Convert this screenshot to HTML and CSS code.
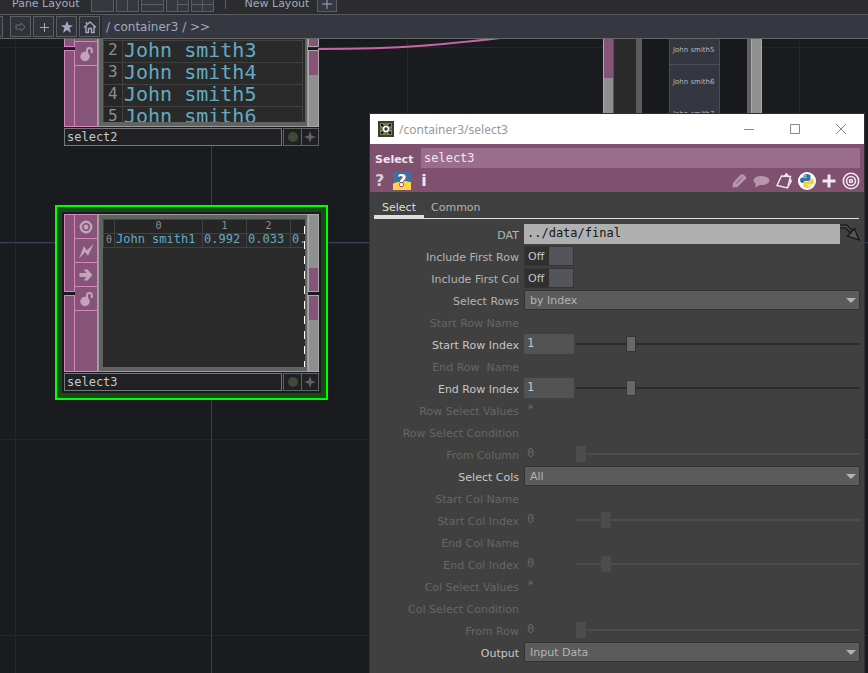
FILE: index.html
```
<!DOCTYPE html>
<html lang="en">
<head>
  <meta charset="UTF-8" />
  <meta name="viewport" content="width=device-width, initial-scale=1.0" />
  <title>/container3/select3</title>
  <link rel="stylesheet" href="styles.css">
</head>
<body>
  <svg class="defs" width="0" height="0">
    <symbol id="target" viewBox="0 0 18 18">
      <circle cx="9" cy="9" r="5.2" fill="none" stroke="currentColor" stroke-width="2.4"/>
      <circle cx="9" cy="9" r="2.4" fill="currentColor"/>
    </symbol>
    <symbol id="bolt" viewBox="0 0 18 18">
      <path d="M2 16.500 7 4l2.800 4.500L16.500 2 11 14 8.200 10z" fill="currentColor"/>
    </symbol>
    <symbol id="arrow" viewBox="0 0 18 18">
      <path d="M2.500 7h7L6.500 3.500h4L15.500 9l-5 5.500h-4l3-3.500h-7z" fill="currentColor"/>
    </symbol>
    <symbol id="lock" viewBox="0 0 18 18">
      <circle cx="8" cy="11.500" r="4.700" fill="currentColor"/>
      <path d="M10 8V5.500a2.400 2.400 0 0 1 4.800 0V8" fill="none" stroke="currentColor" stroke-width="2"/>
    </symbol>
    <symbol id="spark" viewBox="0 0 12 12">
      <path d="M6 0 7.500 4.500 12 6 7.500 7.500 6 12 4.500 7.500 0 6 4.500 4.500z" fill="currentColor"/>
    </symbol>
  </svg>

  <div class="app">
    <header class="layout-bar">
      <span>Pane Layout</span>
      <div class="layouts">
        <button class="layout" aria-label="Single pane"></button>
        <button class="layout split-v" aria-label="Split left and right"></button>
        <button class="layout split-h" aria-label="Split top and bottom"></button>
        <button class="layout split-v split-right" aria-label="Split right side"></button>
        <button class="layout split-v split-h" aria-label="Four panes"></button>
      </div>
      <i class="divider"></i>
      <span>New Layout</span>
      <button class="add-layout" aria-label="Add layout">
        <svg width="12" height="12" viewBox="0 0 12 12"><path d="M6 1v10M1 6h10" stroke="currentColor"/></svg>
      </button>
    </header>

    <nav class="path-bar">
      <button class="nav-btn back" aria-label="Back">
        <svg width="14" height="14" viewBox="0 0 14 14"><path d="M13 5H7V2L2 7l5 5V9h6z" fill="none" stroke="currentColor"/></svg>
      </button>
      <button class="nav-btn dim" aria-label="Forward">
        <svg width="14" height="14" viewBox="0 0 14 14"><path d="M2 5h5V3l4 4-4 4V9H2z" fill="none" stroke="currentColor"/></svg>
      </button>
      <button class="nav-btn" aria-label="Add bookmark">
        <svg width="14" height="14" viewBox="0 0 14 14"><path d="M7.500 3v9M3 7.500h9" stroke="currentColor"/></svg>
      </button>
      <button class="nav-btn" aria-label="Bookmarks">
        <svg width="14" height="14" viewBox="0 0 14 14"><path d="M7 1l1.700 4.300H13L9.600 8l1.400 5-4-3-4 3 1.400-5L1 5.300h4.300z" fill="currentColor"/></svg>
      </button>
      <button class="nav-btn" aria-label="Home">
        <svg width="14" height="14" viewBox="0 0 14 14"><path d="M1 7.500 7 2l6 5.500M3 6v6.500h2.500v-4h3v4H11V6M3.500 4V2" fill="none" stroke="currentColor" stroke-width="1.400"/></svg>
      </button>
      <div class="path">/ container3 / &gt;&gt;</div>
    </nav>

    <main class="network">
      <svg class="wire" width="290" height="20" viewBox="0 0 290 20">
        <path d="M0 10C90 10 130 5 200-3" fill="none" stroke="#c865a6" stroke-width="2"/>
      </svg>

      <section class="node select2">
        <div class="node-body">
          <div class="inputs"><i></i><i></i></div>
          <div class="flags">
            <button aria-label="Display"></button>
            <button aria-label="Bypass"></button>
            <button aria-label="Export"></button>
            <button aria-label="Lock"><svg width="18" height="18"><use href="#lock"/></svg></button>
          </div>
          <div class="viewer">
            <table class="large">
              <tr><th>2</th><td>John smith3</td></tr>
              <tr><th>3</th><td>John smith4</td></tr>
              <tr><th>4</th><td>John smith5</td></tr>
              <tr><th>5</th><td>John smith6</td></tr>
            </table>
          </div>
          <div class="outputs"><i></i><i></i></div>
        </div>
        <div class="node-foot">
          <span class="node-name">select2</span>
          <button class="dot" aria-label="Viewer"></button><button aria-label="Activate"><svg width="12" height="12"><use href="#spark"/></svg></button>
        </div>
      </section>

      <section class="node select3">
        <div class="node-body">
          <div class="inputs"><i></i><i></i></div>
          <div class="flags">
            <button aria-label="Display"><svg width="18" height="18"><use href="#target"/></svg></button>
            <button aria-label="Bypass"><svg width="18" height="18"><use href="#bolt"/></svg></button>
            <button aria-label="Export"><svg width="18" height="18"><use href="#arrow"/></svg></button>
            <button aria-label="Lock"><svg width="18" height="18"><use href="#lock"/></svg></button>
          </div>
          <div class="viewer active">
            <table class="small">
              <tr><th class="index"></th><th class="wide">0</th><th>1</th><th>2</th><th></th></tr>
              <tr><th>0</th><td>John smith1</td><td>0.992</td><td>0.033</td><td>0.</td></tr>
            </table>
          </div>
          <div class="outputs"><i></i><i></i></div>
        </div>
        <div class="node-foot">
          <span class="node-name">select3</span>
          <button class="dot" aria-label="Viewer"></button><button aria-label="Activate"><svg width="12" height="12"><use href="#spark"/></svg></button>
        </div>
      </section>

      <section class="node list-node">
        <div class="list-input"></div>
        <div class="list-flags"></div>
        <div class="list-viewer">
          <ul>
            <li>John smith5</li>
            <li>John smith6</li>
            <li>John smith7</li>
          </ul>
        </div>
        <div class="list-output"></div>
      </section>
    </main>
  </div>

  <div class="window">
    <div class="title-bar">
      <svg width="16" height="16" viewBox="0 0 16 16">
        <path fill="#77855c" stroke="#3b3f33" stroke-width="2" d="M1 1h14v14H1z"/>
        <path d="M8 1v14M1 8h14" stroke="#4c553d"/>
        <path d="M4 4l8 8M12 4l-8 8" stroke="#20221c" stroke-width="1.500"/>
        <path d="M3 3h2v2H3zM11 3h2v2h-2zM3 11h2v2H3zM11 11h2v2h-2z" fill="#111"/>
        <circle cx="8" cy="8" r="2.500" fill="#333" stroke="#fff" stroke-width="1.600"/>
      </svg>
      <span class="title">/container3/select3</span>
      <button aria-label="Minimize"><svg width="12" height="12"><path d="M1 6.500h10" stroke="#888"/></svg></button>
      <button aria-label="Maximize"><svg width="12" height="12"><path d="M1.500 1.500h9v9h-9z" fill="none" stroke="#888"/></svg></button>
      <button aria-label="Close"><svg width="12" height="12"><path d="M1 1l10 10M11 1 1 11" stroke="#888"/></svg></button>
    </div>

    <div class="op-head">
      <div class="op-name">
        <label for="op_name">Select</label>
        <input type="text" id="op_name" value="select3">
      </div>
      <div class="op-tools">
        <button class="help">?</button>
        <button class="python-help">?</button>
        <button class="info">i</button>
        <span class="spacer"></span>
        <button class="faded" aria-label="Edit">
          <svg width="16" height="16" viewBox="0 0 16 16"><path d="M1.500 14.500 2 10 9.500 1.500h3L15 4v1.500L6.500 14z" fill="currentColor"/><path d="M5.500 10.500 11 4.500" stroke="#80506f"/></svg>
        </button>
        <button class="faded" aria-label="Comment">
          <svg width="18" height="16" viewBox="0 0 18 16"><ellipse cx="9.500" cy="7.500" rx="8" ry="4.500" fill="currentColor"/><path d="M4 9.500 3 14.500l6-3z" fill="currentColor"/></svg>
        </button>
        <button aria-label="Copy parameters">
          <svg width="18" height="18" viewBox="0 0 18 18"><path d="M6.500 4 15.500 4.500 12.500 16 2 13.500z" fill="none" stroke="currentColor" stroke-width="1.400"/><path d="M9 4.500 11.500 1l2 3.500z" fill="currentColor" stroke="currentColor"/><path d="M15.500 6 17 9l-4 7.500z" fill="currentColor"/></svg>
        </button>
        <button aria-label="Python">
          <svg width="18" height="18" viewBox="0 0 18 18"><circle cx="9" cy="9" r="9" fill="#fff"/><path d="M5.500 5V3.500Q5.500 2 9 2t3.500 1.700V7Q12.500 9 10.500 9h-3Q5.500 9 5.500 11H4Q2 11 2 8.300T4 5.600h5V5z" fill="#3573a5"/><path d="M12.500 13v1.500Q12.500 16 9 16t-3.500-1.700V11Q5.500 9.500 7.500 9.500h3Q13 9.500 13 6.500h1.500Q16 7 16 9.700t-2 2.700H9v.6z" fill="#fc3"/><circle cx="7.200" cy="3.700" r=".7" fill="#fff"/><circle cx="10.800" cy="14.300" r=".7" fill="#fff"/></svg>
        </button>
        <button aria-label="Expand">
          <svg width="16" height="18" viewBox="0 0 16 18"><path d="M8 2.500v13M1.500 9h13" stroke="currentColor" stroke-width="3"/></svg>
        </button>
        <button aria-label="Target">
          <svg width="18" height="18" viewBox="0 0 18 18" fill="none" stroke="currentColor" stroke-width="1.600"><circle cx="9" cy="9" r="7.700"/><circle cx="9" cy="9" r="4.500"/><circle cx="9" cy="9" r="1.500"/></svg>
        </button>
      </div>
    </div>

    <div class="tabs">
      <button class="tab selected">Select</button>
      <button class="tab">Common</button>
    </div>

    <form class="params">
      <div class="row">
        <label for="dat">DAT</label>
        <div class="field">
          <input type="text" class="dat" id="dat" value="../data/final">
          <svg width="20" height="20" viewBox="0 0 20 20"><path d="M0 2.500h6L13 9" fill="none" stroke="#151515" stroke-width="4"/><path d="M0 2.500h6L12 8" fill="none" stroke="#555" stroke-width="1.500"/><path d="M14.500 4.500 19 16 7.500 12z" fill="#555" stroke="#151515" stroke-width="1.300"/></svg>
        </div>
      </div>
      <div class="row">
        <label for="first_row">Include First Row</label>
        <div class="field"><div class="toggle"><span>Off</span><input type="checkbox" id="first_row"></div></div>
      </div>
      <div class="row">
        <label for="first_col">Include First Col</label>
        <div class="field"><div class="toggle"><span>Off</span><input type="checkbox" id="first_col"></div></div>
      </div>
      <div class="row">
        <label for="select_rows">Select Rows</label>
        <div class="field menu"><select id="select_rows"><option>by Index</option></select></div>
      </div>
      <div class="row off">
        <label for="start_row_name">Start Row Name</label>
        <div class="field"><input type="text" id="start_row_name" disabled></div>
      </div>
      <div class="row on">
        <label for="start_row">Start Row Index</label>
        <div class="field"><input type="text" class="num" id="start_row" value="1"><input type="range" min="-1" max="10" value="1" aria-label="Start Row Index slider"></div>
      </div>
      <div class="row off">
        <label for="end_row_name">End Row&nbsp; Name</label>
        <div class="field"><input type="text" id="end_row_name" disabled></div>
      </div>
      <div class="row on">
        <label for="end_row">End Row Index</label>
        <div class="field"><input type="text" class="num" id="end_row" value="1"><input type="range" min="-1" max="10" value="1" aria-label="End Row Index slider"></div>
      </div>
      <div class="row off">
        <label for="row_values">Row Select Values</label>
        <div class="field"><input type="text" id="row_values" value="*" disabled></div>
      </div>
      <div class="row off">
        <label for="row_condition">Row Select Condition</label>
        <div class="field"><input type="text" id="row_condition" disabled></div>
      </div>
      <div class="row off">
        <label for="from_col">From Column</label>
        <div class="field"><input type="text" class="num" id="from_col" value="0" disabled><input type="range" min="0" max="10" value="0" aria-label="From Column slider" disabled></div>
      </div>
      <div class="row on">
        <label for="select_cols">Select Cols</label>
        <div class="field menu"><select id="select_cols"><option>All</option></select></div>
      </div>
      <div class="row off">
        <label for="start_col_name">Start Col Name</label>
        <div class="field"><input type="text" id="start_col_name" disabled></div>
      </div>
      <div class="row off">
        <label for="start_col">Start Col Index</label>
        <div class="field"><input type="text" class="num" id="start_col" value="0" disabled><input type="range" min="-1" max="10" value="0" aria-label="Start Col Index slider" disabled></div>
      </div>
      <div class="row off">
        <label for="end_col_name">End Col Name</label>
        <div class="field"><input type="text" id="end_col_name" disabled></div>
      </div>
      <div class="row off">
        <label for="end_col">End Col Index</label>
        <div class="field"><input type="text" class="num" id="end_col" value="0" disabled><input type="range" min="-1" max="10" value="0" aria-label="End Col Index slider" disabled></div>
      </div>
      <div class="row off">
        <label for="col_values">Col Select Values</label>
        <div class="field"><input type="text" id="col_values" value="*" disabled></div>
      </div>
      <div class="row off">
        <label for="col_condition">Col Select Condition</label>
        <div class="field"><input type="text" id="col_condition" disabled></div>
      </div>
      <div class="row off">
        <label for="from_row">From Row</label>
        <div class="field"><input type="text" class="num" id="from_row" value="0" disabled><input type="range" min="0" max="10" value="0" aria-label="From Row slider" disabled></div>
      </div>
      <div class="row on">
        <label for="output">Output</label>
        <div class="field menu"><select id="output"><option>Input Data</option></select></div>
      </div>
    </form>
  </div>
</body>
</html>
```

FILE: styles.css
```
* {
  box-sizing: border-box;
}
body {
  margin: 0;
  font-family: "DejaVu Sans", Verdana, sans-serif;
  font-size: 11px;
  color: #b4b4b4;
  background: #1a1b1f;
}
button, input, select {
  font: inherit;
  color: inherit;
  background: none;
  border: 0;
  border-radius: 0;
  padding: 0;
  margin: 0;
}
svg {
  display: block;
}
.defs {
  position: absolute;
}
.app {
  display: flex;
  flex-direction: column;
  height: 100vh;
  overflow: hidden;
}

/* top bars */
.layout-bar {
  display: flex;
  align-items: flex-end;
  height: 15px;
  padding: 0 12px 2px;
  background: #2b2c2f;
  border-bottom: 1px solid #5a5a5a;
  color: #a3a9bd;
  line-height: 16px;
}
.layouts {
  display: flex;
  gap: 2px;
  margin-left: 11px;
}
.layout {
  width: 23px;
  height: 16px;
  background-color: #353841;
  border: 1px solid #5c5e63;
}
.split-v {
  background-image: linear-gradient(#5c5e63, #5c5e63);
  background-size: 1px 100%;
  background-position: center;
  background-repeat: no-repeat;
}
.split-h {
  background-image: linear-gradient(#5c5e63, #5c5e63);
  background-size: 100% 1px;
  background-position: center;
  background-repeat: no-repeat;
}
.split-v.split-h {
  background-image: linear-gradient(#5c5e63, #5c5e63), linear-gradient(#5c5e63, #5c5e63);
  background-size: 1px 100%, 100% 1px;
}
.split-right {
  background-image: linear-gradient(#5c5e63, #5c5e63), linear-gradient(#5c5e63, #5c5e63);
  background-size: 1px 100%, 50% 1px;
  background-position: center, right center;
}
.divider {
  width: 1px;
  height: 14px;
  margin: 0 19px 3px 11px;
  background: #5c5e63;
}
.add-layout {
  display: flex;
  align-items: center;
  justify-content: center;
  width: 20px;
  height: 16px;
  margin-left: 8px;
  background: #353841;
  border: 1px solid #5c5e63;
}
.path-bar {
  display: flex;
  align-items: center;
  gap: 2px;
  height: 24px;
  background: #2b2c2f;
  border-bottom: 1px solid #666;
  color: #a3a9bd;
}
.nav-btn {
  display: flex;
  align-items: center;
  justify-content: center;
  width: 21px;
  height: 21px;
  background: #31333b;
  border: 1px solid #5c5e63;
}
.back {
  margin: 0 5px 0 -18px;
}
.dim {
  color: #666a75;
}
.path {
  flex: 1;
  align-self: stretch;
  padding-left: 4px;
  background: #353841;
  font-size: 12px;
  line-height: 24px;
}

/* network canvas */
.network {
  position: relative;
  flex: 1;
  overflow: hidden;
  background-color: #1a1b1f;
  background-image:
    linear-gradient(#3c3b5a, #3c3b5a),
    linear-gradient(#3c3b5a, #3c3b5a),
    linear-gradient(90deg, #25262b 1px, transparent 1px),
    linear-gradient(#25262b 1px, transparent 1px);
  background-size: 1px 100%, 100% 1px, 196px 196px, 196px 196px;
  background-position: 211px 0, 0 203px, 15px 0, 0 8px;
  background-repeat: no-repeat, no-repeat, repeat, repeat;
}
.wire {
  position: absolute;
  left: 318px;
  top: 0;
}
.node {
  position: absolute;
}
.select2 {
  left: 64px;
  top: -70px;
  width: 255px;
}
.select3 {
  left: 55px;
  top: 166px;
  width: 273px;
  padding: 7px;
  background: #1a1b1f;
  border: 2px solid #00ff00;
  box-shadow: inset 0 0 0 5px #164a1a;
}
.node-body {
  display: flex;
  height: 158px;
}
.inputs, .outputs {
  display: flex;
  flex-direction: column;
  gap: 3px;
  width: 11px;
}
.inputs i, .outputs i {
  flex: 1;
}
.inputs i {
  background: #855478;
  border: 1px solid #d884bf;
}
.outputs i {
  background: #8f8f8f;
  border: 1px solid #aaaaaa;
}
.outputs i:first-child {
  background: linear-gradient(to top, #855478 23px, #8f8f8f 23px);
}
.outputs i:last-child {
  background: linear-gradient(#855478 24px, #8f8f8f 24px);
}
.flags {
  width: 23px;
  background: #855478;
  border: 1px solid #d884bf;
  border-left: 0;
  color: #c5a3bc;
}
.flags button {
  display: flex;
  align-items: center;
  justify-content: center;
  width: 100%;
  height: 24px;
  border-bottom: 1px solid #d884bf;
}
.viewer {
  position: relative;
  flex: 1;
  overflow: hidden;
  background: #2a2a2a;
  border: 5px solid #626262;
  border-right-width: 3px;
  outline: 1px solid #999;
  outline-offset: -1px;
}
/* dashed edge of an active viewer */
.active::after {
  content: "";
  position: absolute;
  top: 7px;
  right: 0;
  bottom: 0;
  width: 1px;
  background: repeating-linear-gradient(#fff 0 8px, transparent 8px 15px);
}
table {
  border-collapse: collapse;
  table-layout: fixed;
  font-family: "DejaVu Sans Mono", monospace;
}
th, td {
  border: 1px solid #414141;
  padding: 0 1px;
  text-align: left;
  vertical-align: top;
  overflow: hidden;
  white-space: nowrap;
}
th {
  color: #8f8f8f;
  font-weight: normal;
  background: #262626;
}
td {
  color: #62aac4;
}
.small {
  width: 232px;
  font-size: 12px;
}
.small th, .small td {
  height: 14px;
  line-height: 11px;
}
.small th {
  font-size: 10px;
  line-height: 12px;
  text-align: center;
}
.small .index {
  width: 11px;
}
.small .wide {
  width: 88px;
}
.large {
  width: 200px;
  margin-top: 66px;
  font-size: 20px;
}
.large th, .large td {
  height: 22px;
  line-height: 18px;
}
.large th {
  width: 19px;
  padding-left: 4px;
  font-size: 16px;
}
.node-foot {
  display: flex;
  height: 18px;
  margin-top: 1px;
}
.node-foot button {
  display: flex;
  align-items: center;
  justify-content: center;
  width: 18px;
  border: 1px solid #626262;
  color: #626262;
  background: #202124;
}
.node-foot .dot {
  margin-left: 1px;
  border-right: 0;
}
.dot::before {
  content: "";
  width: 10px;
  height: 10px;
  border-radius: 50%;
  background: #414a38;
}
.node-name {
  flex: 1;
  padding-left: 2px;
  border: 1px solid #777;
  background: #202124;
  color: #c8c8c8;
  font-family: "DejaVu Sans Mono", monospace;
  font-size: 12px;
  line-height: 16px;
}

/* list component */
.list-node {
  left: 603px;
  top: 0;
  display: flex;
  width: 159px;
  height: 180px;
}
.list-input {
  width: 11px;
  background: linear-gradient(#855478 39px, #8f8f8f 39px);
  border-left: 1px solid #aaaaaa;
  border-right: 1px solid #555;
}
.list-flags {
  width: 22px;
  background: #2b2b2b;
}
.list-viewer {
  flex: 1;
  display: flex;
  justify-content: center;
  background: #18191c;
  border-left: 6px solid #5c5c5c;
  border-right: 4px solid #626262;
}
.list-viewer ul {
  width: 51px;
  margin: 0;
  padding: 0;
  list-style: none;
  background: #343740;
  border: 1px solid #4c4e55;
  border-top: 0;
}
.list-viewer li {
  height: 32px;
  padding-left: 3px;
  color: #b5b5b8;
  font-size: 7px;
  line-height: 34px;
  white-space: nowrap;
}
.list-viewer li:first-child {
  height: 26px;
  line-height: 22px;
  border-bottom: 1px solid #4c4e55;
}
.list-output {
  width: 11px;
  background: #8f8f8f;
  border-left: 1px solid #aaaaaa;
  border-right: 1px solid #aaaaaa;
}

/* parameter window */
.window {
  position: absolute;
  left: 370px;
  right: 4px;
  top: 114px;
  bottom: 0;
  overflow: hidden;
  background: #404040;
  box-shadow: 0 0 0 1px #303033;
}
.title-bar {
  display: flex;
  align-items: center;
  height: 30px;
  padding-left: 8px;
  background: #fff;
  color: #999;
  font-family: "Noto Sans", sans-serif;
  font-size: 12px;
}
.title {
  flex: 1;
  padding-left: 5px;
}
.title-bar button {
  display: flex;
  justify-content: center;
  width: 46px;
}
.op-head {
  padding: 4px 4px 0 5px;
  height: 48px;
  background: #80506f;
  color: #f0e8ee;
}
.op-name {
  display: flex;
  align-items: center;
}
.op-name label {
  width: 46px;
  padding-top: 2px;
  font-weight: bold;
}
.op-name input {
  flex: 1;
  height: 20px;
  padding-left: 3px;
  background: #9b6d8c;
  font-family: "DejaVu Sans Mono", monospace;
  font-size: 12px;
}
.op-tools {
  display: flex;
  align-items: center;
  gap: 5px;
  height: 25px;
  font-size: 16px;
  font-weight: bold;
}
.help {
  width: 13px;
  text-align: left;
  color: #dcc9d6;
}
.python-help {
  width: 18px;
  height: 18px;
  line-height: 18px;
  background: radial-gradient(ellipse 16px 9px at 11px 18px, #ffd24a 95%, #3772a3 100%);
  color: #fff;
  text-shadow: 1px 0 #80506f, -1px 0 #80506f, 0 1px #80506f, 0 -1px #80506f;
}
.info {
  width: 16px;
}
.spacer {
  flex: 1;
}
.faded {
  color: #b795ac;
}
.tabs {
  display: flex;
  height: 27px;
  margin: 0 5px 0 4px;
  border-bottom: 1px solid #dedede;
}
.tab {
  height: 26px;
  padding: 7px 7px 0;
  border-bottom: 3px solid transparent;
}
.selected {
  width: 50px;
  color: #dedede;
  border-bottom-color: #dedede;
}
.params {
  display: flex;
  flex-direction: column;
  gap: 2px;
  padding: 5px 4px 0 0;
}
.row {
  display: grid;
  grid-template-columns: 149px 1fr;
  column-gap: 5px;
  height: 20px;
}
.row label {
  padding-top: 2px;
  line-height: 20px;
  text-align: right;
  white-space: nowrap;
}
.on label {
  color: #c6c6c6;
}
.off {
  color: #666;
}
.field {
  display: flex;
  align-items: center;
  gap: 2px;
  height: 20px;
  min-width: 0;
}
.field input[type="text"] {
  flex: 1;
  min-width: 0;
  height: 20px;
  padding: 0 0 2px 3px;
  font-family: "DejaVu Sans Mono", monospace;
  font-size: 12px;
}
.field .dat {
  background: #b0b0b0;
  color: #151515;
}
.dat + svg {
  flex: none;
  margin-left: -2px;
}
.field input.num {
  flex: none;
  width: 50px;
  background: #535353;
  color: #c6c6c6;
}
.off .field input.num {
  background: none;
  color: #666;
}
.toggle {
  display: flex;
  align-items: center;
  width: 50px;
  height: 20px;
  padding-left: 3px;
  border: 1px solid #353535;
  background: #303030;
  color: #c6c6c6;
}
.toggle span {
  flex: 1;
}
.toggle input {
  appearance: none;
  width: 24px;
  height: 18px;
  background: #55545a;
}
.menu {
  position: relative;
}
.menu select {
  appearance: none;
  width: 100%;
  height: 20px;
  padding-left: 5px;
  background: #5b5b5b;
  border: 1px solid #333;
}
.menu::after {
  content: "";
  position: absolute;
  right: 4px;
  top: 8px;
  border: 5px solid transparent;
  border-top-color: #b4b4b4;
  border-bottom: 0;
  pointer-events: none;
}
input[type="range"] {
  appearance: none;
  flex: 1;
  min-width: 0;
  height: 20px;
  background: linear-gradient(#2b2b2b, #2b2b2b) center / 100% 2px no-repeat;
}
input[type="range"]::-webkit-slider-thumb {
  appearance: none;
  width: 10px;
  height: 16px;
  background: #676767;
  border: 1px solid #333;
}
input[type="range"]:disabled {
  background-image: linear-gradient(#4c4c4c, #4c4c4c);
}
input[type="range"]:disabled::-webkit-slider-thumb {
  background: #4c4c4c;
  border-color: #4c4c4c;
}
```
